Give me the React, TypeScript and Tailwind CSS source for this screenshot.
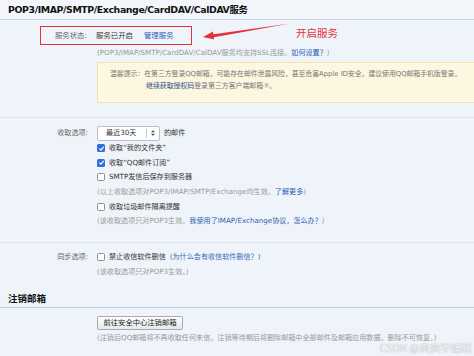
import React from "react";

function Check({ on }: { on?: boolean }) {
  return on ? (
    <span className="mr-[4px] inline-flex h-[8px] w-[8px] shrink-0 items-center justify-center rounded-[1.5px] bg-[#2f6fd8]">
      <svg viewBox="0 0 8 8" className="h-[7px] w-[7px]">
        <path d="M1.5 4.2 L3.3 5.9 L6.6 2.2" fill="none" stroke="#fff" strokeWidth="1.3" />
      </svg>
    </span>
  ) : (
    <span className="mr-[4px] inline-block h-[8px] w-[8px] shrink-0 rounded-[1.5px] border border-[#8a8f96] bg-white" />
  );
}

function Row({ label, children, className = "" }: { label?: string; children: React.ReactNode; className?: string }) {
  return (
    <div className={`flex items-center ${className}`}>
      <div className="w-[88px] shrink-0 text-right text-[#666]">{label}</div>
      <div className="ml-[9px] flex items-center whitespace-nowrap">{children}</div>
    </div>
  );
}

export default function App() {
  return (
    <div className="relative h-[356px] w-[474px] overflow-hidden bg-[#eff4fa] text-[7.1px] leading-[10px] text-[#333] font-['DejaVu_Sans','Noto_Sans_CJK_SC',sans-serif]">
      {/* title */}
      <div className="flex h-[20px] items-center border-b border-[#c6d5ea] bg-[#f3f7fc] pl-[8px] text-[9.4px] font-bold tracking-[-0.4px] text-[#111]">
        POP3/IMAP/SMTP/Exchange/CardDAV/CalDAV服务
      </div>

      {/* service status */}
      <div className="border-b border-[#dce4ef] pb-[14px]">
        <div className="ml-[40px] mt-[6px] flex h-[19px] w-[152px] items-center border-[1.5px] border-[#e3343c] text-[7.4px]">
          <div className="w-[46px] shrink-0 text-right text-[#666]">服务状态:</div>
          <div className="ml-[9px] whitespace-nowrap">服务已开启</div>
          <div className="ml-[11px] whitespace-nowrap text-[#2d5eb3]">管理服务</div>
        </div>
        <Row className="mt-[3px] h-[10px]">
          <span className="text-[#999]">(POP3/IMAP/SMTP/CardDAV/CalDAV服务均支持SSL连接。</span>
          <span className="text-[#2d5eb3]">如何设置？</span>
          <span className="text-[#999]">)</span>
        </Row>
        <div className="ml-[97px] mt-[4px] h-[41px] border border-r-0 border-[#f3e2b0] bg-[#fdf7e1] pl-[12px] pt-[5px] text-[6.9px] text-[#777]">
          <div className="flex h-[12px] items-center whitespace-nowrap tracking-[-0.05px]">
            <span>温馨提示：</span>
            <span>在第三方登录QQ邮箱，可能存在邮件泄露风险，甚至危害Apple ID安全，建议使用QQ邮箱手机版登录。</span>
          </div>
          <div className="flex h-[12px] items-center whitespace-nowrap pl-[36px]">
            <span className="text-[#2d4f8e]">继续获取授权码</span>
            <span>登录第三方客户端邮箱⑦。</span>
          </div>
        </div>
      </div>

      {/* receive options */}
      <div className="border-b border-[#dce4ef] pb-[13px] pt-[7px]">
        <Row label="收取选项:" className="h-[16px]">
          <div className="flex h-[15px] w-[63px] items-center rounded-[2px] border border-[#b8c2ce] bg-white pl-[8px]">
            <span className="flex-1">最近30天</span>
            <span className="h-[9px] w-px bg-[#c8c8c8]" />
            <svg viewBox="0 0 6 8" className="mx-[4px] h-[6px] w-[4px]">
              <path d="M3 0 L6 3 L0 3 Z M3 8 L6 5 L0 5 Z" fill="#444" />
            </svg>
          </div>
          <span className="ml-[4px]">的邮件</span>
        </Row>
        <Row className="h-[14.6px]">
          <Check on />
          收取“我的文件夹”
        </Row>
        <Row className="h-[14.6px]">
          <Check on />
          收取“QQ邮件订阅”
        </Row>
        <Row className="h-[14.6px]">
          <Check />
          SMTP发信后保存到服务器
        </Row>
        <Row className="h-[14.6px]">
          <span className="text-[#999]">(以上收取选项对POP3/IMAP/SMTP/Exchange均生效。</span>
          <span className="text-[#2d5eb3]">了解更多</span>
          <span className="text-[#999]">)</span>
        </Row>
        <Row className="h-[14.6px]">
          <Check />
          收取垃圾邮件隔离提醒
        </Row>
        <Row className="h-[14.6px]">
          <span className="text-[#999]">(该收取选项只对POP3生效。</span>
          <span className="text-[#2d5eb3]">我使用了IMAP/Exchange协议，怎么办？</span>
          <span className="text-[#999]">)</span>
        </Row>
      </div>

      {/* sync options */}
      <div className="pt-[7px]">
        <Row label="同步选项:" className="h-[15px]">
          <Check />
          禁止收信软件删信
          <span className="ml-[4px] text-[#3a6cc0]">(为什么会有收信软件删信？)</span>
        </Row>
        <Row className="h-[15px]">
          <span className="text-[#999]">(该收取选项只对POP3生效。)</span>
        </Row>
      </div>

      {/* cancel mailbox */}
      <div className="mt-[11px] flex h-[17px] items-center border-b border-[#bccfe6] pl-[8px] text-[9.5px] font-bold text-[#111]">
        注销邮箱
      </div>
      <Row className="mt-[8px] h-[14px]">
        <button
          type="button"
          className="flex h-[14px] w-[86px] items-center justify-center rounded-[2px] border border-[#a8acb2] bg-gradient-to-b from-white to-[#e6e8eb] text-[7.3px] text-[#222]"
        >
          前往安全中心注销邮箱
        </button>
      </Row>
      <Row className="mt-[2px] h-[12px]">
        <span className="text-[#999]">
          (注销后QQ邮箱将不再收取任何来信，注销等待期后将删除邮箱中全部邮件及邮箱应用数据，删除不可恢复。)
        </span>
      </Row>

      {/* annotation */}
      <svg className="pointer-events-none absolute left-0 top-0" width="474" height="356" viewBox="0 0 474 356">
        <path d="M290 23.5 L212 34.6 L212.6 37.6 Z" fill="#e5323a" />
        <path d="M203 37 L213 31.5 L214 39.5 Z" fill="#e5323a" />
      </svg>
      <div className="absolute left-[296px] top-[27px] text-[10.5px] leading-[12px] text-[#e5323a] font-['Noto_Sans_CJK_SC',sans-serif]">
        开启服务
      </div>
      <div className="absolute bottom-[3px] right-[2px] text-[10.5px] leading-[11px] text-[#f4f6f9] [text-shadow:0_0_1px_rgba(60,60,60,0.55)] font-['Noto_Sans_CJK_SC',sans-serif]">
        CSDN @爽爽学编程
      </div>
    </div>
  );
}
